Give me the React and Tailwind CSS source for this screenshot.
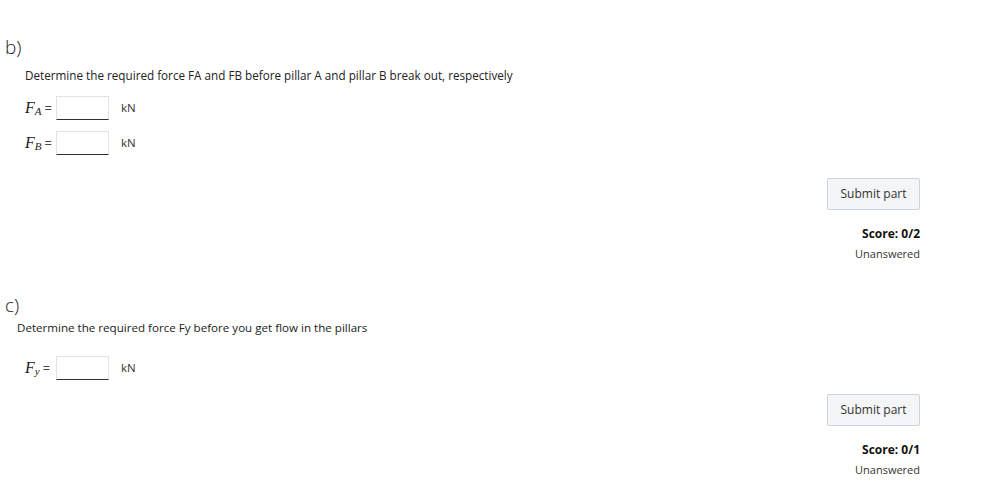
const Var = ({ name, sub }) => (
  <span className="inline-flex items-baseline w-[31px] font-['Liberation_Serif',serif] italic text-[16px] text-[#222]">
    {name}
    <sub className="text-[11px] relative top-[2px]">{sub}</sub>
    <span className="not-italic font-['Open_Sans',sans-serif] text-[13px] text-[#444] ml-[3px]">=</span>
  </span>
);

const AnswerRow = ({ name, sub, className = '' }) => (
  <div className={`flex items-center ${className}`}>
    <Var name={name} sub={sub} />
    <div className="w-[53px] h-[24px] border border-[#e2e2e2] border-b-[#2f2f2f] bg-white" />
    <span className="ml-[12px] text-[11.5px] text-[#333]">kN</span>
  </div>
);

const PartFooter = ({ score, className = '' }) => (
  <div className={`flex flex-col items-end pr-[87px] ${className}`}>
    <button className="h-[32px] w-[93px] rounded-[2px] border border-[#cdd6dc] bg-[#f4f5f6] text-[12px] font-normal text-[#333]">
      Submit part
    </button>
    <div className="mt-[16px] text-[12px] leading-[16px] font-bold text-[#111]">Score: {score}</div>
    <div className="mt-[4px] text-[11px] leading-[16px] text-[#333]">Unanswered</div>
  </div>
);

export default function App() {
  return (
    <div className="w-[1007px] h-[495px] bg-white overflow-hidden font-['Open_Sans',sans-serif]">
      <div className="pt-[36px]">
        <div className="pl-[5px] text-[19px] leading-[22px] font-light text-[#222]">b)</div>
        <p className="ml-[25px] mt-[9px] text-[11.7px] leading-[16px] text-[#222]">
          Determine the required force FA and FB before pillar A and pillar B break out, respectively
        </p>
        <AnswerRow name="F" sub="A" className="ml-[25px] mt-[13px]" />
        <AnswerRow name="F" sub="B" className="ml-[25px] mt-[11px]" />
        <PartFooter score="0/2" className="mt-[23px]" />
      </div>
      <div className="mt-[32px]">
        <div className="pl-[5px] text-[19px] leading-[22px] font-light text-[#222]">c)</div>
        <p className="ml-[17px] mt-[4px] text-[11.6px] leading-[16px] text-[#222]">
          Determine the required force Fy before you get flow in the pillars
        </p>
        <AnswerRow name="F" sub="y" className="ml-[25px] mt-[20px]" />
        <PartFooter score="0/1" className="mt-[14px]" />
      </div>
    </div>
  );
}
